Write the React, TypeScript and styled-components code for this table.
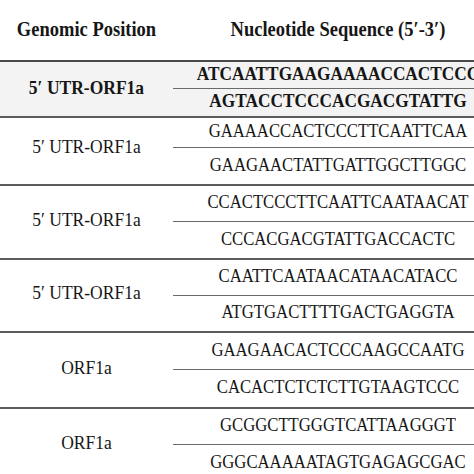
import React from "react";
import styled, { createGlobalStyle } from "styled-components";

const Global = createGlobalStyle`
  html, body { margin: 0; padding: 0; background: #ffffff; overflow: hidden; }
  body { width: 474px; height: 474px; }
`;

const Frame = styled.div`
  width: 474px;
  height: 474px;
  overflow: hidden;
  background: #fff;
`;

const Table = styled.table`
  border-collapse: collapse;
  width: 503px;
  table-layout: fixed;
  font-family: "Liberation Serif", "Times New Roman", serif;
  color: #161616;
`;

const Tall = styled.span`
  display: inline-block;
  transform: scaleY(1.13);
  transform-origin: center;
`;

const HeadCell = styled.th<{ $w: number }>`
  width: ${(p) => p.$w}px;
  height: 58px;
  padding: 0 0 2px 0;
  font-size: 18.5px;
  font-weight: bold;
  text-align: center;
  vertical-align: middle;
  border-bottom: 2px solid #4a4a4a;
  white-space: nowrap;
`;

const Group = styled.tbody<{ $shade?: boolean }>`
  background: ${(p) => (p.$shade ? "#f3f3f3" : "#ffffff")};
  border-bottom: 2px solid #5c5c5c;
`;

const PosCell = styled.td<{ $bold?: boolean; $lift: number }>`
  font-size: 17.5px;
  font-weight: ${(p) => (p.$bold ? "bold" : "normal")};
  text-align: center;
  vertical-align: middle;
  padding: 0 0 ${(p) => p.$lift}px 0;
  white-space: nowrap;
`;

const SeqCell = styled.td<{ $bold?: boolean; $h: number; $split?: boolean }>`
  height: ${(p) => p.$h - 3}px;
  padding: 0 0 3px 0;
  font-size: ${(p) => (p.$bold ? "17.3px" : "16.7px")};
  font-weight: ${(p) => (p.$bold ? "bold" : "normal")};
  text-align: center;
  vertical-align: middle;
  white-space: nowrap;
  overflow: visible;
  border-bottom: ${(p) => (p.$split ? "1.5px solid #6a6a6a" : "none")};
`;

type Row = { pos: string; seqs: [string, string]; h: [number, number]; bold?: boolean; lift: number };

const rows: Row[] = [
  { pos: "5′ UTR-ORF1a", seqs: ["ATCAATTGAAGAAAACCACTCCC", "AGTACCTCCCACGACGTATTG"], h: [26, 27], bold: true, lift: 3 },
  { pos: "5′ UTR-ORF1a", seqs: ["GAAAACCACTCCCTTCAATTCAA", "GAAGAACTATTGATTGGCTTGGC"], h: [29, 36], lift: 10 },
  { pos: "5′ UTR-ORF1a", seqs: ["CCACTCCCTTCAATTCAATAACAT", "CCCACGACGTATTGACCACTC"], h: [35, 36], lift: 6 },
  { pos: "5′ UTR-ORF1a", seqs: ["CAATTCAATAACATAACATACC", "ATGTGACTTTTGACTGAGGTA"], h: [35, 35], lift: 6 },
  { pos: "ORF1a", seqs: ["GAAGAACACTCCCAAGCCAATG", "CACACTCTCTCTTGTAAGTCCC"], h: [36, 37], lift: 6 },
  { pos: "ORF1a", seqs: ["GCGGCTTGGGTCATTAAGGGT", "GGGCAAAAATAGTGAGAGCGAC"], h: [35, 36], lift: 6 },
];

export default function App() {
  return (
    <Frame>
      <Global />
      <Table>
        <thead>
          <tr>
            <HeadCell $w={173}><Tall>Genomic Position</Tall></HeadCell>
            <HeadCell $w={330}><Tall>Nucleotide Sequence (5′-3′)</Tall></HeadCell>
          </tr>
        </thead>
        {rows.map((r, i) => (
          <Group key={i} $shade={r.bold}>
            <tr>
              <PosCell rowSpan={2} $bold={r.bold} $lift={r.lift}><Tall>{r.pos}</Tall></PosCell>
              <SeqCell $h={r.h[0]} $bold={r.bold} $split><Tall>{r.seqs[0]}</Tall></SeqCell>
            </tr>
            <tr>
              <SeqCell $h={r.h[1]} $bold={r.bold}><Tall>{r.seqs[1]}</Tall></SeqCell>
            </tr>
          </Group>
        ))}
      </Table>
    </Frame>
  );
}
